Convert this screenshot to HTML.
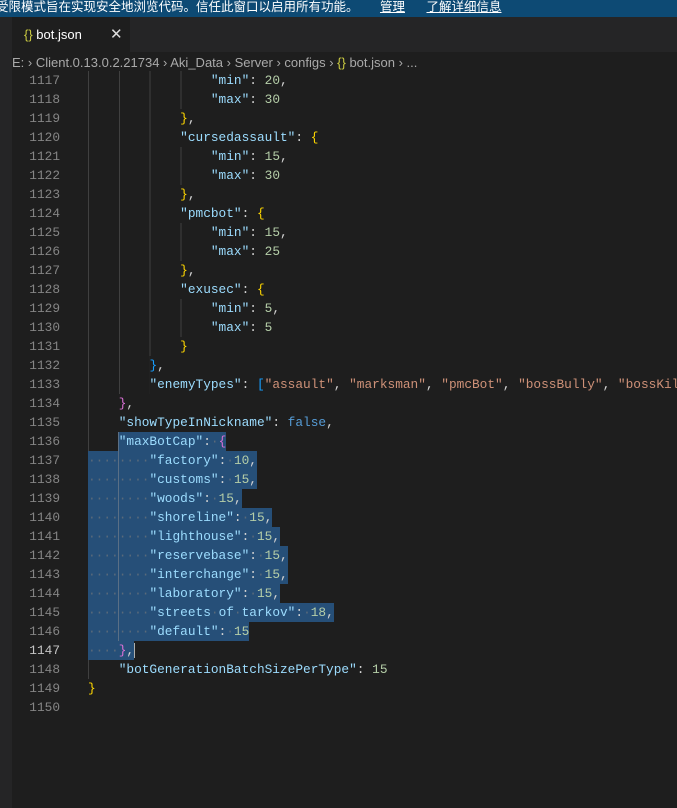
<!DOCTYPE html>
<html><head><meta charset="utf-8"><style>
body{margin:0;width:677px;height:808px;background:#1e1e1e;overflow:hidden;position:relative;font-family:"Liberation Sans","Noto Sans CJK SC",sans-serif}
.banner{position:absolute;left:-4px;top:0;width:681px;height:17px;background:#0d4a74;color:#fff;font-size:12.5px;line-height:15px;white-space:nowrap}
.banner u{margin-left:18px}
.tabs{position:absolute;top:17px;left:0;width:677px;height:35px;background:#252526}
.tab{position:absolute;left:12px;top:0;width:118px;height:35px;background:#1e1e1e;color:#fff;font-size:13px;line-height:35px}
.strip{position:absolute;left:0;top:17px;width:12px;height:791px;background:#252526}
.bc{position:absolute;top:52px;left:12px;height:20px;width:665px;background:#1e1e1e;color:#a9a9a9;font-size:13px;line-height:22px;white-space:nowrap}
.ln{position:absolute;left:12px;width:48px;text-align:right;color:#858585;font-family:"Liberation Mono",monospace;font-size:12.8px;line-height:19px}
.l{position:absolute;left:88px;height:19px;font-family:"Liberation Mono",monospace;font-size:12.8px;line-height:19px;white-space:pre;color:#d4d4d4;background-image:repeating-linear-gradient(to right,#404040 0 1px,transparent 1px 30.8px);background-repeat:no-repeat;background-size:0 19px}
.k{color:#9cdcfe}.s{color:#ce9178}.n{color:#b5cea8}.b{color:#569cd6}
.g{color:#ffd700}.p{color:#da70d6}.c{color:#179fff}
.sel{background:#264f78;display:inline-block;height:19px;vertical-align:top}.d{color:#5a6a7a}
.gd{position:absolute;left:118px;top:432px;width:1px;height:209px;background:#5a6f85}
</style></head><body>
<div class="banner">受限模式旨在实现安全地浏览代码。信任此窗口以启用所有功能。 <u>管理</u> <u>了解详细信息</u></div>
<div class="tabs"><div class="tab"><span style="margin-left:12px;color:#cbcb41">{}</span> bot.json<span style="position:absolute;left:98px;font-size:15px;color:#ddd">✕</span></div></div>
<div class="strip"></div>
<div class="bc">E: › Client.0.13.0.2.21734 › Aki_Data › Server › configs › <span style="color:#cbcb41">{}</span> bot.json › ...</div>

<div class="ln" style="top:71px">1117</div><div class="l" style="top:71px;background-size:123.2px 19px">                <span class="k">"min"</span>: <span class="n">20</span>,</div>
<div class="ln" style="top:90px">1118</div><div class="l" style="top:90px;background-size:123.2px 19px">                <span class="k">"max"</span>: <span class="n">30</span></div>
<div class="ln" style="top:109px">1119</div><div class="l" style="top:109px;background-size:92.4px 19px">            <span class="g">}</span>,</div>
<div class="ln" style="top:128px">1120</div><div class="l" style="top:128px;background-size:92.4px 19px">            <span class="k">"cursedassault"</span>: <span class="g">{</span></div>
<div class="ln" style="top:147px">1121</div><div class="l" style="top:147px;background-size:123.2px 19px">                <span class="k">"min"</span>: <span class="n">15</span>,</div>
<div class="ln" style="top:166px">1122</div><div class="l" style="top:166px;background-size:123.2px 19px">                <span class="k">"max"</span>: <span class="n">30</span></div>
<div class="ln" style="top:185px">1123</div><div class="l" style="top:185px;background-size:92.4px 19px">            <span class="g">}</span>,</div>
<div class="ln" style="top:204px">1124</div><div class="l" style="top:204px;background-size:92.4px 19px">            <span class="k">"pmcbot"</span>: <span class="g">{</span></div>
<div class="ln" style="top:223px">1125</div><div class="l" style="top:223px;background-size:123.2px 19px">                <span class="k">"min"</span>: <span class="n">15</span>,</div>
<div class="ln" style="top:242px">1126</div><div class="l" style="top:242px;background-size:123.2px 19px">                <span class="k">"max"</span>: <span class="n">25</span></div>
<div class="ln" style="top:261px">1127</div><div class="l" style="top:261px;background-size:92.4px 19px">            <span class="g">}</span>,</div>
<div class="ln" style="top:280px">1128</div><div class="l" style="top:280px;background-size:92.4px 19px">            <span class="k">"exusec"</span>: <span class="g">{</span></div>
<div class="ln" style="top:299px">1129</div><div class="l" style="top:299px;background-size:123.2px 19px">                <span class="k">"min"</span>: <span class="n">5</span>,</div>
<div class="ln" style="top:318px">1130</div><div class="l" style="top:318px;background-size:123.2px 19px">                <span class="k">"max"</span>: <span class="n">5</span></div>
<div class="ln" style="top:337px">1131</div><div class="l" style="top:337px;background-size:92.4px 19px">            <span class="g">}</span></div>
<div class="ln" style="top:356px">1132</div><div class="l" style="top:356px;background-size:61.6px 19px">        <span class="c">}</span>,</div>
<div class="ln" style="top:375px">1133</div><div class="l" style="top:375px;background-size:61.6px 19px">        <span class="k">"enemyTypes"</span>: <span class="c">[</span><span class="s">"assault"</span>, <span class="s">"marksman"</span>, <span class="s">"pmcBot"</span>, <span class="s">"bossBully"</span>, <span class="s">"bossKilla"</span></div>
<div class="ln" style="top:394px">1134</div><div class="l" style="top:394px;background-size:30.8px 19px">    <span class="p">}</span>,</div>
<div class="ln" style="top:413px">1135</div><div class="l" style="top:413px;background-size:30.8px 19px">    <span class="k">"showTypeInNickname"</span>: <span class="b">false</span>,</div>
<div class="ln" style="top:432px">1136</div><div class="l" style="top:432px;background-size:30.8px 19px">    <span class="sel"><span class="k">"maxBotCap"</span>:<span class="d">·</span><span class="p">{</span></span></div>
<div class="ln" style="top:451px">1137</div><div class="l" style="top:451px"><span class="sel"><span class="d">········</span><span class="k">"factory"</span>:<span class="d">·</span><span class="n">10</span>,</span></div>
<div class="ln" style="top:470px">1138</div><div class="l" style="top:470px"><span class="sel"><span class="d">········</span><span class="k">"customs"</span>:<span class="d">·</span><span class="n">15</span>,</span></div>
<div class="ln" style="top:489px">1139</div><div class="l" style="top:489px"><span class="sel"><span class="d">········</span><span class="k">"woods"</span>:<span class="d">·</span><span class="n">15</span>,</span></div>
<div class="ln" style="top:508px">1140</div><div class="l" style="top:508px"><span class="sel"><span class="d">········</span><span class="k">"shoreline"</span>:<span class="d">·</span><span class="n">15</span>,</span></div>
<div class="ln" style="top:527px">1141</div><div class="l" style="top:527px"><span class="sel"><span class="d">········</span><span class="k">"lighthouse"</span>:<span class="d">·</span><span class="n">15</span>,</span></div>
<div class="ln" style="top:546px">1142</div><div class="l" style="top:546px"><span class="sel"><span class="d">········</span><span class="k">"reservebase"</span>:<span class="d">·</span><span class="n">15</span>,</span></div>
<div class="ln" style="top:565px">1143</div><div class="l" style="top:565px"><span class="sel"><span class="d">········</span><span class="k">"interchange"</span>:<span class="d">·</span><span class="n">15</span>,</span></div>
<div class="ln" style="top:584px">1144</div><div class="l" style="top:584px"><span class="sel"><span class="d">········</span><span class="k">"laboratory"</span>:<span class="d">·</span><span class="n">15</span>,</span></div>
<div class="ln" style="top:603px">1145</div><div class="l" style="top:603px"><span class="sel"><span class="d">········</span><span class="k">"streets<span class="d">·</span>of<span class="d">·</span>tarkov"</span>:<span class="d">·</span><span class="n">18</span>,</span></div>
<div class="ln" style="top:622px">1146</div><div class="l" style="top:622px"><span class="sel"><span class="d">········</span><span class="k">"default"</span>:<span class="d">·</span><span class="n">15</span></span></div>
<div class="ln" style="top:641px;color:#c6c6c6">1147</div><div class="l" style="top:641px"><span class="sel"><span class="d">····</span><span class="p">}</span>,</span><span style="border-left:1.5px solid #aeafad"></span></div>
<div class="gd"></div>
<div class="ln" style="top:660px">1148</div><div class="l" style="top:660px;background-size:30.8px 19px">    <span class="k">"botGenerationBatchSizePerType"</span>: <span class="n">15</span></div>
<div class="ln" style="top:679px">1149</div><div class="l" style="top:679px"><span class="g">}</span></div>
<div class="ln" style="top:698px">1150</div>
</body></html>
